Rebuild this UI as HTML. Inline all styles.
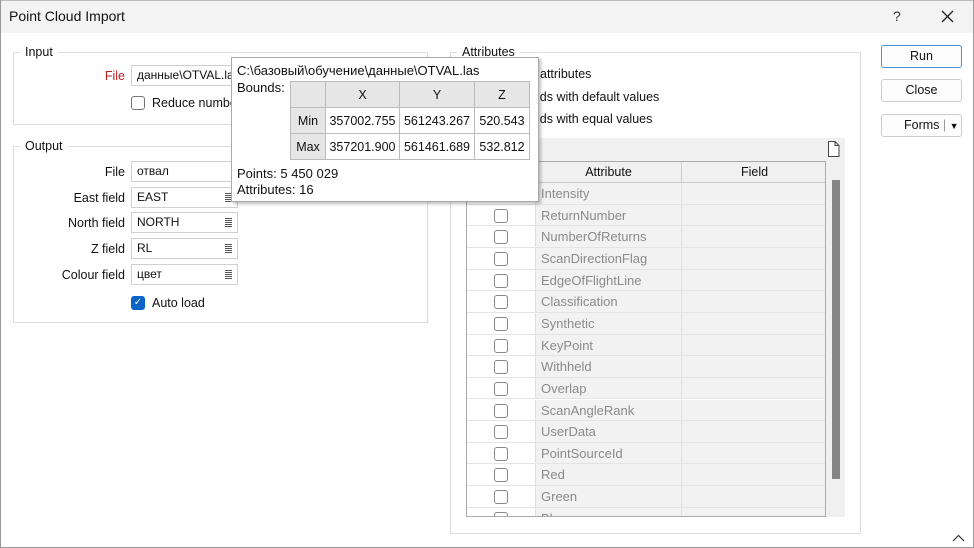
<!DOCTYPE html>
<html><head><meta charset="utf-8"><style>
*{box-sizing:border-box;margin:0;padding:0}
body{width:974px;height:548px;background:#fff;font-family:"Liberation Sans","DejaVu Sans",sans-serif;font-size:12.5px;color:#111;position:relative;overflow:hidden}
.a{position:absolute}
.grp{position:absolute;border:1px solid #dcdcdc}
.lg{position:absolute;background:#fff;padding:0 5px;top:-8px;left:6px;font-size:12.5px}
.lbl{position:absolute;text-align:right;width:120px;left:5px}
.inp{position:absolute;left:131px;width:107px;height:21px;border:1px solid #d0d0d0;padding:2px 5px;font-size:12px}
.ham{position:absolute;right:5px;top:5px;width:7px;height:9px;background:repeating-linear-gradient(#555 0 1px,transparent 1px 2px)}
.cb{position:absolute;width:14px;height:14px;border:1px solid #777;border-radius:3px;background:#fff}
.btn{position:absolute;left:881px;width:81px;height:23px;border:1px solid #ccc;border-radius:3px;text-align:center;line-height:21px;background:#fdfdfd}
.row{position:absolute;left:0;width:360px;height:21.65px;border-bottom:1px solid #e4e4e4}
.row .c1{position:absolute;left:0;width:68px;height:100%;background:#fff}
.row .c2{position:absolute;left:68px;width:146px;height:100%;background:#f2f2f2;border-left:1px solid #e0e0e0;color:#8a8a8a;padding-left:5px;line-height:21px;font-size:13px}
.row .c3{position:absolute;left:214px;width:146px;height:100%;background:#f2f2f2;border-left:1px solid #e0e0e0}
.row .cb{left:27px;top:4px;border-color:#888}
table.t{border-collapse:collapse;position:absolute;left:290px;top:81px;font-size:12.5px;table-layout:fixed;width:239px}
table.t td{border:1px solid #bbb;height:26px;text-align:center;padding:0;white-space:nowrap;overflow:hidden}
table.t td.h{background:#e6e6e6}
</style></head><body>
<div class="a" style="left:0;top:0;width:974px;height:33px;background:#f3f3f3;border-top:1px solid #bbb"></div>
<div class="a" style="left:9px;top:8px;font-size:14px">Point Cloud Import</div>
<div class="a" style="left:893px;top:8px;font-size:14px;color:#333">?</div>
<svg class="a" style="left:941px;top:10px" width="13" height="13" viewBox="0 0 13 13"><path d="M1 1L12 12M12 1L1 12" stroke="#222" stroke-width="1.3"/></svg>
<div class="a" style="left:0;top:0;width:974px;height:548px;border:1px solid #999;border-top:none"></div>

<div class="grp" style="left:13px;top:52px;width:415px;height:73px"><span class="lg">Input</span></div>
<div class="lbl" style="top:69px;color:#b22">File</div>
<div class="inp" style="top:65px;width:110px">данные\OTVAL.las</div>
<div class="cb" style="left:131px;top:96px"></div>
<div class="a" style="left:152px;top:96px">Reduce number</div>

<div class="grp" style="left:13px;top:146px;width:415px;height:177px"><span class="lg">Output</span></div>
<div class="lbl" style="top:165px">File</div><div class="inp" style="top:161px">отвал</div>
<div class="lbl" style="top:191px">East field</div><div class="inp" style="top:187px">EAST<div class="ham"></div></div>
<div class="lbl" style="top:216px">North field</div><div class="inp" style="top:212px">NORTH<div class="ham"></div></div>
<div class="lbl" style="top:242px">Z field</div><div class="inp" style="top:238px">RL<div class="ham"></div></div>
<div class="lbl" style="top:268px">Colour field</div><div class="inp" style="top:264px">цвет<div class="ham"></div></div>
<div class="cb" style="left:131px;top:296px;background:#0a64c8;border-color:#0a64c8;color:#fff;font-size:10px;line-height:12px;text-align:center">✓</div>
<div class="a" style="left:152px;top:296px">Auto load</div>

<div class="grp" style="left:450px;top:52px;width:411px;height:482px"><span class="lg">Attributes</span></div>
<div class="a" style="left:540px;top:67px">attributes</div>
<div class="a" style="left:537px;top:90px">lds with default values</div>
<div class="a" style="left:537px;top:112px">lds with equal values</div>
<div class="a" style="left:466px;top:138px;width:379px;height:379px;background:#f0f0f0"></div>
<svg class="a" style="left:827px;top:141px" width="13" height="16" viewBox="0 0 13 16"><path d="M1.5 0.5H8L12 4.5V15.5H1.5Z M8 0.5V4.5H12" fill="#fff" stroke="#444"/></svg>
<div class="a" style="left:466px;top:161px;width:360px;height:356px;border:1px solid #aaa;background:#fff;overflow:hidden">
 <div class="a" style="left:0;top:0;width:360px;height:21px;background:#f0f0f0;border-bottom:1px solid #ccc">
  <div class="a" style="left:68px;width:146px;height:21px;border-left:1px solid #ccc;text-align:center;line-height:21px">Attribute</div>
  <div class="a" style="left:214px;width:146px;height:21px;border-left:1px solid #ccc;text-align:center;line-height:21px">Field</div>
 </div>
 <div class="a" style="left:0;top:21px">
  <div class="row" style="top:0"><div class="c1"><div class="cb"></div></div><div class="c2">Intensity</div><div class="c3"></div></div>
  <div class="row" style="top:21.65px"><div class="c1"><div class="cb"></div></div><div class="c2">ReturnNumber</div><div class="c3"></div></div>
  <div class="row" style="top:43.3px"><div class="c1"><div class="cb"></div></div><div class="c2">NumberOfReturns</div><div class="c3"></div></div>
  <div class="row" style="top:64.95px"><div class="c1"><div class="cb"></div></div><div class="c2">ScanDirectionFlag</div><div class="c3"></div></div>
  <div class="row" style="top:86.6px"><div class="c1"><div class="cb"></div></div><div class="c2">EdgeOfFlightLine</div><div class="c3"></div></div>
  <div class="row" style="top:108.25px"><div class="c1"><div class="cb"></div></div><div class="c2">Classification</div><div class="c3"></div></div>
  <div class="row" style="top:129.9px"><div class="c1"><div class="cb"></div></div><div class="c2">Synthetic</div><div class="c3"></div></div>
  <div class="row" style="top:151.55px"><div class="c1"><div class="cb"></div></div><div class="c2">KeyPoint</div><div class="c3"></div></div>
  <div class="row" style="top:173.2px"><div class="c1"><div class="cb"></div></div><div class="c2">Withheld</div><div class="c3"></div></div>
  <div class="row" style="top:194.85px"><div class="c1"><div class="cb"></div></div><div class="c2">Overlap</div><div class="c3"></div></div>
  <div class="row" style="top:216.5px"><div class="c1"><div class="cb"></div></div><div class="c2">ScanAngleRank</div><div class="c3"></div></div>
  <div class="row" style="top:238.15px"><div class="c1"><div class="cb"></div></div><div class="c2">UserData</div><div class="c3"></div></div>
  <div class="row" style="top:259.8px"><div class="c1"><div class="cb"></div></div><div class="c2">PointSourceId</div><div class="c3"></div></div>
  <div class="row" style="top:281.45px"><div class="c1"><div class="cb"></div></div><div class="c2">Red</div><div class="c3"></div></div>
  <div class="row" style="top:303.1px"><div class="c1"><div class="cb"></div></div><div class="c2">Green</div><div class="c3"></div></div>
  <div class="row" style="top:324.75px"><div class="c1"><div class="cb"></div></div><div class="c2">Blue</div><div class="c3"></div></div>
 </div>
</div>
<div class="a" style="left:832px;top:180px;width:8px;height:299px;background:#858585"></div>

<div class="btn" style="top:45px;border-color:#4a8fd8">Run</div>
<div class="btn" style="top:79px">Close</div>
<div class="btn" style="top:114px;text-align:left;padding-left:22px">Forms <span style="color:#999">|</span> <span style="font-size:9px">▼</span></div>
<svg class="a" style="left:952px;top:534px" width="13" height="8" viewBox="0 0 13 8"><path d="M1 7L6.5 1.5L12 7" fill="none" stroke="#333" stroke-width="1.2"/></svg>

<div class="a" style="left:231px;top:57px;width:308px;height:145px;background:#fff;border:1px solid #aaa;box-shadow:2px 2px 3px rgba(0,0,0,.25)"></div>
<div class="a" style="left:237px;top:63px;font-size:13px">C:\базовый\обучение\данные\OTVAL.las</div>
<div class="a" style="left:237px;top:80px;font-size:13px">Bounds:</div>
<table class="t">
<colgroup><col style="width:35px"><col style="width:74px"><col style="width:75px"><col style="width:55px"></colgroup>
<tr><td class="h"></td><td class="h">X</td><td class="h">Y</td><td class="h">Z</td></tr>
<tr><td class="h">Min</td><td>357002.755</td><td>561243.267</td><td>520.543</td></tr>
<tr><td class="h">Max</td><td>357201.900</td><td>561461.689</td><td>532.812</td></tr>
</table>
<div class="a" style="left:237px;top:166px;font-size:13px">Points: 5 450 029</div>
<div class="a" style="left:237px;top:182px;font-size:13px">Attributes: 16</div>
</body></html>
